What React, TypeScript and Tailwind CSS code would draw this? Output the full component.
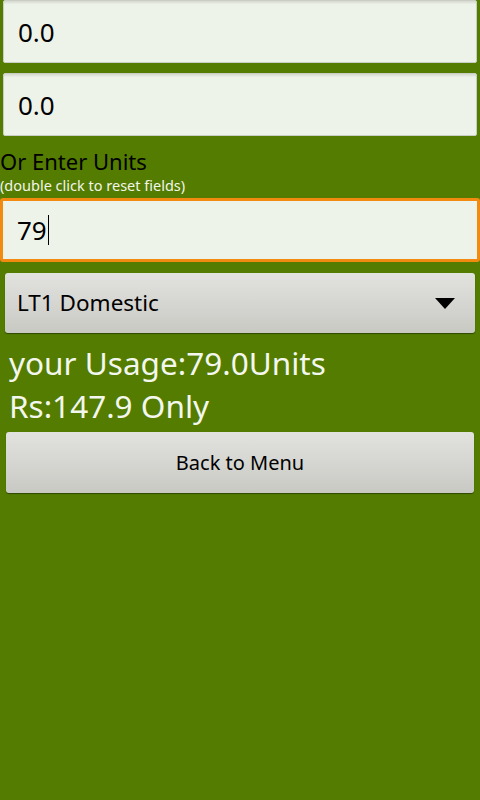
import React from 'react'

const font = { fontFamily: '"Noto Sans", "Open Sans", sans-serif' }

function Field({ value, focused }: { value: string; focused?: boolean }) {
   if (focused) {
      return (
         <div className="h-[64px] rounded-[3px] border-[3px] border-[#f28a12] bg-[#eef3ea] flex items-center pl-[14px]">
            <span className="text-[26px] text-black leading-none">{value}</span>
            <span className="ml-[1px] w-[1.5px] h-[30px] bg-black" />
         </div>
      )
   }
   return (
      <div className="mx-[3px] h-[63px] rounded-[2px] border border-[#c9cdc4] bg-[#eef3ea] shadow-[inset_0_3px_2px_-1px_#d8dcd3] flex items-center pl-[14px]">
         <span className="text-[26px] text-black leading-none">{value}</span>
      </div>
   )
}

export default function App() {
   return (
      <div style={font} className="w-[480px] h-[800px] bg-[#537c00] flex flex-col overflow-hidden">
         <Field value="0.0" />
         <div className="h-[10px]" />
         <Field value="0.0" />
         <div className="mt-[12px] text-[22px] leading-[27px] text-black">Or Enter Units</div>
         <div className="text-[14.5px] leading-[21px] text-[#f2f5ea]">(double click to reset fields)</div>
         <div className="mt-[2px]">
            <Field value="79" focused />
         </div>
         <div className="mt-[11px] mx-[5px] h-[60px] rounded-[3px] bg-gradient-to-b from-[#e2e3df] to-[#c9c9c4] shadow-[0_1px_1px_#2f4a00] flex items-center justify-between pl-[12px] pr-[20px]">
            <span className="text-[22.5px] text-black">LT1 Domestic</span>
            <svg width="20" height="11" viewBox="0 0 20 11">
               <polygon points="0,0 20,0 10,11" fill="#000" />
            </svg>
         </div>
         <div className="mt-[8px] pl-[9px] text-[31.5px] leading-[43px] text-[#f4f7ee]">your Usage:79.0Units</div>
         <div className="pl-[9px] text-[31.5px] leading-[43px] text-[#f4f7ee]">Rs:147.9 Only</div>
         <div className="mt-[5px] mx-[6px] h-[61px] rounded-[3px] bg-gradient-to-b from-[#e2e3df] to-[#c9c9c4] shadow-[0_1px_1px_#2f4a00] flex items-center justify-center">
            <span className="text-[20px] text-black">Back to Menu</span>
         </div>
      </div>
   )
}
